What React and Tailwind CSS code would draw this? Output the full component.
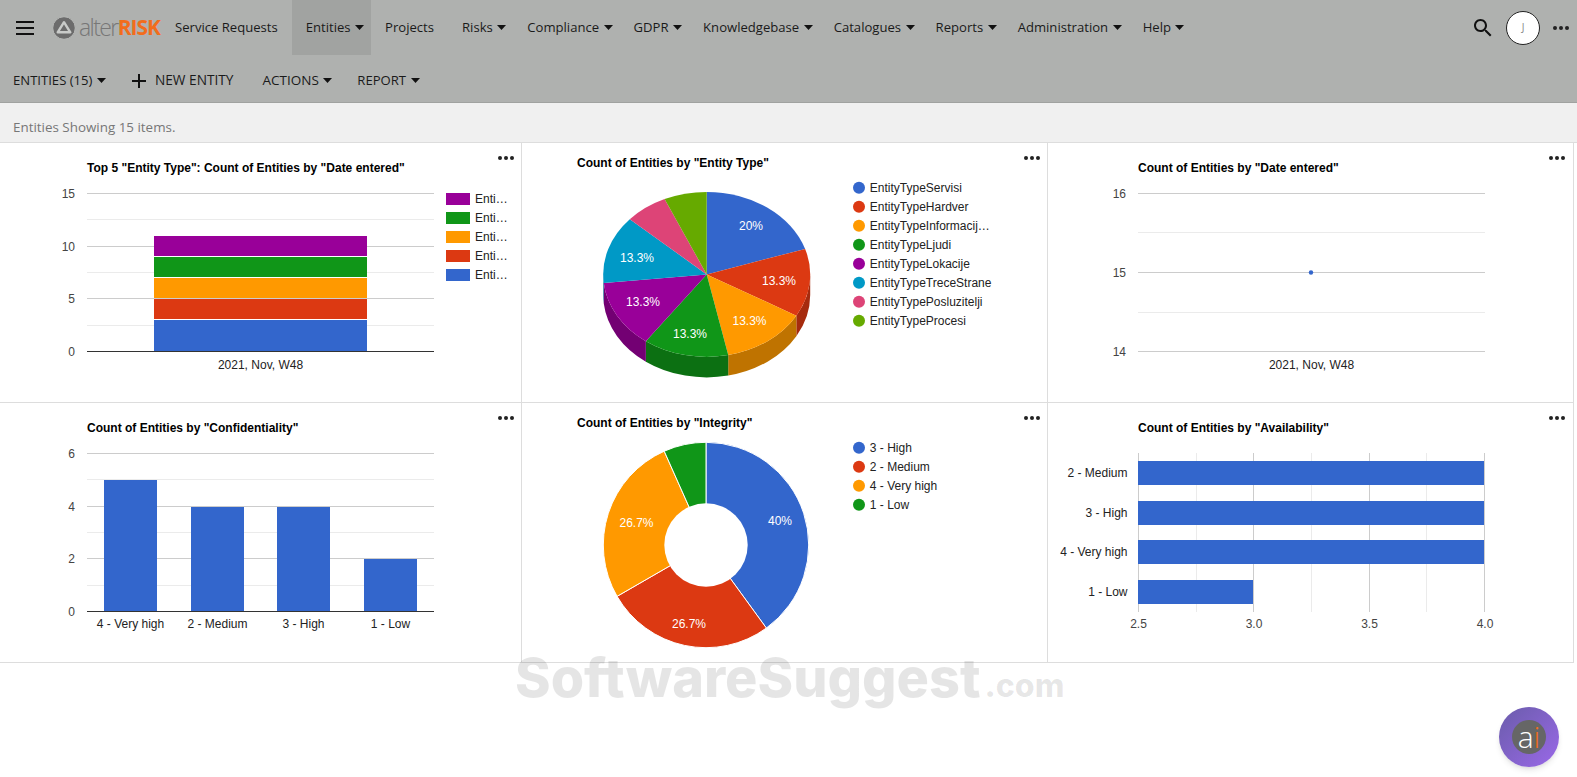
import React from "react";

const BLUE = "#3366cc";
const RED = "#dc3912";
const ORANGE = "#ff9900";
const GREEN = "#109618";
const PURPLE = "#990099";
const TEAL = "#0099c6";
const PINK = "#dd4477";
const LIME = "#66aa00";

const Caret = () => (
  <svg className="ml-[4.5px] shrink-0" width="9" height="5" viewBox="0 0 9 5" fill="#111">
    <path d="M0 0h9L4.5 5z" />
  </svg>
);

const NavItem = ({ label, caret, active }) => (
  <div
    className={`flex h-[55px] items-center pl-[14px] ${caret ? "pr-[7px]" : "pr-[14px]"} ${active ? "bg-[#a1a3a1]" : ""}`}
  >
    <span>{label}</span>
    {caret && <Caret />}
  </div>
);

const Dots = ({ className = "" }) => (
  <div className={`flex gap-[2px] ${className}`}>
    <span className="h-1 w-1 rounded-full bg-[#222]" />
    <span className="h-1 w-1 rounded-full bg-[#222]" />
    <span className="h-1 w-1 rounded-full bg-[#222]" />
  </div>
);

const Logo = () => (
  <div className="flex items-center">
    <svg width="24" height="24" viewBox="0 0 24 24">
      <circle cx="12" cy="12" r="11.3" fill="#6c6c6c" stroke="#b9bbb9" strokeWidth="1" />
      <path d="M12 6.2 L18.3 16.3 L5.7 16.3 Z" fill="none" stroke="#c9cbc9" strokeWidth="2.4" strokeLinejoin="round" />
    </svg>
    <span className="ml-[3px] font-['Open_Sans',sans-serif] text-[23px] font-light tracking-[-1.6px] text-[#777]">alter</span>
    <span className="font-['Open_Sans',sans-serif] text-[21px] font-bold tracking-[-1px] text-[#f26d1c]">RISK</span>
  </div>
);

const Txt = ({ x, y, anchor = "start", size = 12, fill = "#222", weight, children }) => (
  <text x={x} y={y} textAnchor={anchor} fontSize={size} fill={fill} fontWeight={weight}>
    {children}
  </text>
);

const Title = ({ x, y, children }) => (
  <Txt x={x} y={y} weight="700" fill="#000">
    {children}
  </Txt>
);

const HLine = ({ x1, x2, y, color = "#cccccc" }) => <line x1={x1} x2={x2} y1={y} y2={y} stroke={color} strokeWidth="1" />;

const Chart = ({ x, y, w, h, children }) => (
  <svg
    viewBox={`${x} ${y} ${w} ${h}`}
    className="block h-full w-full font-['Liberation_Sans',Arial,sans-serif]"
  >
    {children}
  </svg>
);

const pt = (cx, cy, rx, ry, deg) => {
  const a = (deg * Math.PI) / 180;
  return [cx + rx * Math.sin(a), cy - ry * Math.cos(a)];
};

const slicePath = (cx, cy, rx, ry, from, to) => {
  const [x1, y1] = pt(cx, cy, rx, ry, from);
  const [x2, y2] = pt(cx, cy, rx, ry, to);
  return `M${cx} ${cy} L${x1} ${y1} A${rx} ${ry} 0 ${to - from > 180 ? 1 : 0} 1 ${x2} ${y2} Z`;
};

const sidePath = (cx, cy, rx, ry, depth, from, to) => {
  const [x1, y1] = pt(cx, cy, rx, ry, from);
  const [x2, y2] = pt(cx, cy, rx, ry, to);
  return `M${x1} ${y1} A${rx} ${ry} 0 0 1 ${x2} ${y2} L${x2} ${y2 + depth} A${rx} ${ry} 0 0 0 ${x1} ${y1 + depth} Z`;
};

const Legend = ({ items, y }) =>
  items.map(([label, color], i) => (
    <g key={label}>
      <circle cx="859" cy={y + i * 19} r="6" fill={color} />
      <Txt x="869.8" y={y + i * 19 + 4.2} fill="#222">
        {label}
      </Txt>
    </g>
  ));

const StackedChart = () => {
  const stacks = [
    [PURPLE, 236, 256],
    [GREEN, 257, 277],
    [ORANGE, 278, 298],
    [RED, 299, 319],
    [BLUE, 320, 351],
  ];
  return (
    <Chart x={0} y={143} w={521} h={259}>
      <Title x="87" y="172">Top 5 "Entity Type": Count of Entities by "Date entered"</Title>
      {[219.5, 272.5, 325.5].map((y) => <HLine key={y} x1="87" x2="434" y={y} color="#ebebeb" />)}
      {[193.5, 246.5, 298.5].map((y) => <HLine key={y} x1="87" x2="434" y={y} />)}
      {stacks.map(([c, a, b]) => <rect key={c} x="154" y={a} width="213" height={b - a} fill={c} />)}
      <HLine x1="87" x2="434" y={351.5} color="#333" />
      {[["15", 197.5], ["10", 250.5], ["5", 303], ["0", 356]].map(([t, y]) => (
        <Txt key={t} x="75" y={y} anchor="end" fill="#444">{t}</Txt>
      ))}
      <Txt x="260.5" y="369" anchor="middle">2021, Nov, W48</Txt>
      {stacks.map(([c], i) => (
        <g key={c}>
          <rect x="446" y={193 + i * 19} width="24" height="12" fill={c} />
          <Txt x="475" y={203 + i * 19}>Enti…</Txt>
        </g>
      ))}
    </Chart>
  );
};

const Pie3d = () => {
  const cx = 706.7, cy = 274.4, rx = 103.5, ry = 82.5, d = 20.5;
  const slices = [
    [BLUE, 0, 72, null],
    [RED, 72, 120, "#a62b0e"],
    [ORANGE, 120, 168, "#bf7300"],
    [GREEN, 168, 216, "#0c7012"],
    [PURPLE, 216, 264, "#730073"],
    [TEAL, 264, 312, "#007395"],
    [PINK, 312, 336, null],
    [LIME, 336, 360, null],
  ];
  const labels = [
    ["20%", 751, 226],
    ["13.3%", 779, 281],
    ["13.3%", 749.5, 321],
    ["13.3%", 690, 334],
    ["13.3%", 643, 302],
    ["13.3%", 637, 258],
  ];
  return (
    <Chart x={522} y={143} w={525} h={259}>
      <Title x="577" y="167">Count of Entities by "Entity Type"</Title>
      {slices.filter((s) => s[3]).map(([c, a, b, side]) => (
        <path key={c} d={sidePath(cx, cy, rx, ry, d, Math.max(a, 90), Math.min(b, 270))} fill={side} />
      ))}
      {slices.map(([c, a, b]) => <path key={c} d={slicePath(cx, cy, rx, ry, a, b)} fill={c} />)}
      {labels.map(([t, x, y]) => (
        <Txt key={`${x}`} x={x} y={y + 4.2} anchor="middle" fill="#fff">{t}</Txt>
      ))}
      <Legend
        y={187.7}
        items={[
          ["EntityTypeServisi", BLUE],
          ["EntityTypeHardver", RED],
          ["EntityTypeInformacij…", ORANGE],
          ["EntityTypeLjudi", GREEN],
          ["EntityTypeLokacije", PURPLE],
          ["EntityTypeTreceStrane", TEAL],
          ["EntityTypePosluzitelji", PINK],
          ["EntityTypeProcesi", LIME],
        ]}
      />
    </Chart>
  );
};

const LineChart = () => (
  <Chart x={1048} y={143} w={525} h={259}>
    <Title x="1138" y="172">Count of Entities by "Date entered"</Title>
    {[232.5, 312.5].map((y) => <HLine key={y} x1="1138" x2="1485" y={y} color="#ebebeb" />)}
    {[193.5, 272.5, 351.5].map((y) => <HLine key={y} x1="1138" x2="1485" y={y} />)}
    <circle cx="1311" cy="272.5" r="2.2" fill={BLUE} />
    {[["16", 197.5], ["15", 276.5], ["14", 355.5]].map(([t, y]) => (
      <Txt key={t} x="1126" y={y} anchor="end" fill="#444">{t}</Txt>
    ))}
    <Txt x="1311.5" y="369" anchor="middle">2021, Nov, W48</Txt>
  </Chart>
);

const ColumnChart = () => {
  const bars = [
    [104, 480, "4 - Very high", 130.5],
    [191, 507, "2 - Medium", 217.5],
    [277, 507, "3 - High", 303.5],
    [364, 559, "1 - Low", 390.5],
  ];
  return (
    <Chart x={0} y={403} w={521} h={259}>
      <Title x="87" y="432">Count of Entities by "Confidentiality"</Title>
      {[479.5, 532.5, 585.5].map((y) => <HLine key={y} x1="87" x2="434" y={y} color="#ebebeb" />)}
      {[453.5, 506.5, 558.5].map((y) => <HLine key={y} x1="87" x2="434" y={y} />)}
      {bars.map(([x, top, t, c]) => (
        <g key={t}>
          <rect x={x} y={top} width="53" height={611 - top} fill={BLUE} />
          <Txt x={c} y="628" anchor="middle">{t}</Txt>
        </g>
      ))}
      <HLine x1="87" x2="434" y={611.5} color="#333" />
      {[["6", 457.5], ["4", 510.5], ["2", 562.5], ["0", 615.5]].map(([t, y]) => (
        <Txt key={t} x="75" y={y} anchor="end" fill="#444">{t}</Txt>
      ))}
    </Chart>
  );
};

const Donut = () => {
  const cx = 706, cy = 545, R = 102.7, r = 41.7;
  const parts = [
    [BLUE, 0, 144],
    [RED, 144, 240],
    [ORANGE, 240, 336],
    [GREEN, 336, 360],
  ];
  return (
    <Chart x={522} y={403} w={525} h={259}>
      <Title x="577" y="427">Count of Entities by "Integrity"</Title>
      {parts.map(([c, a, b]) => (
        <path key={c} d={slicePath(cx, cy, R, R, a, b)} fill={c} stroke="#fff" strokeWidth="1" />
      ))}
      <circle cx={cx} cy={cy} r={r} fill="#fff" />
      {[["40%", 780, 521], ["26.7%", 689, 624], ["26.7%", 636.5, 523]].map(([t, x, y]) => (
        <Txt key={x} x={x} y={y + 4.2} anchor="middle" fill="#fff">{t}</Txt>
      ))}
      <Legend
        y={447.7}
        items={[
          ["3 - High", BLUE],
          ["2 - Medium", RED],
          ["4 - Very high", ORANGE],
          ["1 - Low", GREEN],
        ]}
      />
    </Chart>
  );
};

const BarChart = () => {
  const rows = [
    ["2 - Medium", 461, 1484],
    ["3 - High", 501, 1484],
    ["4 - Very high", 540, 1484],
    ["1 - Low", 580, 1253],
  ];
  return (
    <Chart x={1048} y={403} w={525} h={259}>
      <Title x="1138" y="432">Count of Entities by "Availability"</Title>
      {[1196.5, 1311.5, 1426.5].map((x) => <line key={x} x1={x} x2={x} y1="453" y2="612" stroke="#ebebeb" />)}
      {[1138.5, 1253.5, 1369.5, 1484.5].map((x) => <line key={x} x1={x} x2={x} y1="453" y2="612" stroke="#ccc" />)}
      {rows.map(([t, y, end]) => (
        <g key={t}>
          <rect x="1138" y={y} width={end - 1138} height="24" fill={BLUE} />
          <Txt x="1127.5" y={y + 16} anchor="end">{t}</Txt>
        </g>
      ))}
      {[["2.5", 1138.5], ["3.0", 1254], ["3.5", 1369.5], ["4.0", 1485]].map(([t, x]) => (
        <Txt key={t} x={x} y="628" anchor="middle" fill="#444">{t}</Txt>
      ))}
    </Chart>
  );
};

const Card = ({ children, dots = "right-[7px]" }) => (
  <div className="relative border-r border-b border-[#dddddd]">
    {children}
    <Dots className={`absolute top-[13px] ${dots}`} />
  </div>
);

const App = () => {
  return (
    <div className="relative h-[777px] w-full overflow-hidden bg-white font-['Open_Sans',sans-serif] text-[13.1px] text-[#1a1a1a]">
      <header className="h-[103px] border-b border-[#a0a2a0] bg-[#afb1af]">
        <div className="flex h-[55px] items-center">
          <div className="ml-[16px] flex w-[18px] flex-col gap-[4px]">
            <span className="h-[2px] bg-[#111]" />
            <span className="h-[2px] bg-[#111]" />
            <span className="h-[2px] bg-[#111]" />
          </div>
          <div className="ml-[18px] w-[109px]">
            <Logo />
          </div>
          <nav className="flex items-center">
            <NavItem label="Service Requests" />
            <NavItem label="Entities" caret active />
            <NavItem label="Projects" />
            <NavItem label="Risks" caret />
            <NavItem label="Compliance" caret />
            <NavItem label="GDPR" caret />
            <NavItem label="Knowledgebase" caret />
            <NavItem label="Catalogues" caret />
            <NavItem label="Reports" caret />
            <NavItem label="Administration" caret />
            <NavItem label="Help" caret />
          </nav>
          <div className="ml-auto flex items-center pr-[8px]">
            <svg width="24" height="24" viewBox="0 0 24 24" fill="#111">
              <path d="M15.5 14h-.79l-.28-.27C15.41 12.59 16 11.11 16 9.5 16 5.91 13.09 3 9.5 3S3 5.91 3 9.5 5.91 16 9.5 16c1.61 0 3.09-.59 4.23-1.57l.27.28v.79l5 4.99L20.49 19l-4.99-5zm-6 0C7.01 14 5 11.99 5 9.5S7.01 5 9.5 5 14 7.01 14 9.5 11.99 14 9.5 14z" />
            </svg>
            <div className="ml-[11px] flex h-[34px] w-[34px] items-center justify-center rounded-full border border-[#222] bg-white text-[10px] text-[#888]">
              J
            </div>
            <Dots className="ml-[13px]" />
          </div>
        </div>
        <div className="flex h-[47px] items-center pt-[4px] pl-[13px]">
          <div className="flex items-center">
            <span>ENTITIES (15)</span>
            <Caret />
          </div>
          <svg className="ml-[25px]" width="16" height="16" viewBox="0 0 16 16" stroke="#111" strokeWidth="2">
            <path d="M8 1v14M1 8h14" />
          </svg>
          <span className="ml-[8px] text-[13.7px]">NEW ENTITY</span>
          <div className="ml-[29px] flex items-center text-[13.5px]">
            <span>ACTIONS</span>
            <Caret />
          </div>
          <div className="ml-[25px] flex items-center">
            <span>REPORT</span>
            <Caret />
          </div>
        </div>
      </header>
      <div className="h-[40px] border-b border-[#dddddd] bg-[#f0f0f0] pt-[14px] pl-[13px] text-[13.4px] text-[#777]">
        Entities Showing 15 items.
      </div>
      <div className="grid grid-cols-[522px_526px_526px] grid-rows-[260px_260px]">
        <Card><StackedChart /></Card>
        <Card><Pie3d /></Card>
        <Card dots="right-[8px]"><LineChart /></Card>
        <Card><ColumnChart /></Card>
        <Card><Donut /></Card>
        <Card dots="right-[8px]"><BarChart /></Card>
      </div>
      <div className="pointer-events-none absolute top-[637px] left-[515px] flex items-baseline font-['Inter',sans-serif] font-extrabold text-black/10">
        <span className="text-[54px]">SoftwareSuggest</span>
        <span className="ml-[4px] text-[32px]">.com</span>
      </div>
      <div className="absolute top-[707px] left-[1499px] flex h-[60px] w-[60px] items-center justify-center rounded-full bg-gradient-to-br from-[#6a5cab] to-[#9a68e8] shadow-md">
        <div className="flex h-[34px] w-[34px] items-center justify-center rounded-full bg-[#666] font-['Open_Sans',sans-serif] text-[30px] leading-none font-light text-white">
          <span>a</span>
          <span className="text-[#f26d1c]">i</span>
        </div>
      </div>
    </div>
  );
};

export default App;
